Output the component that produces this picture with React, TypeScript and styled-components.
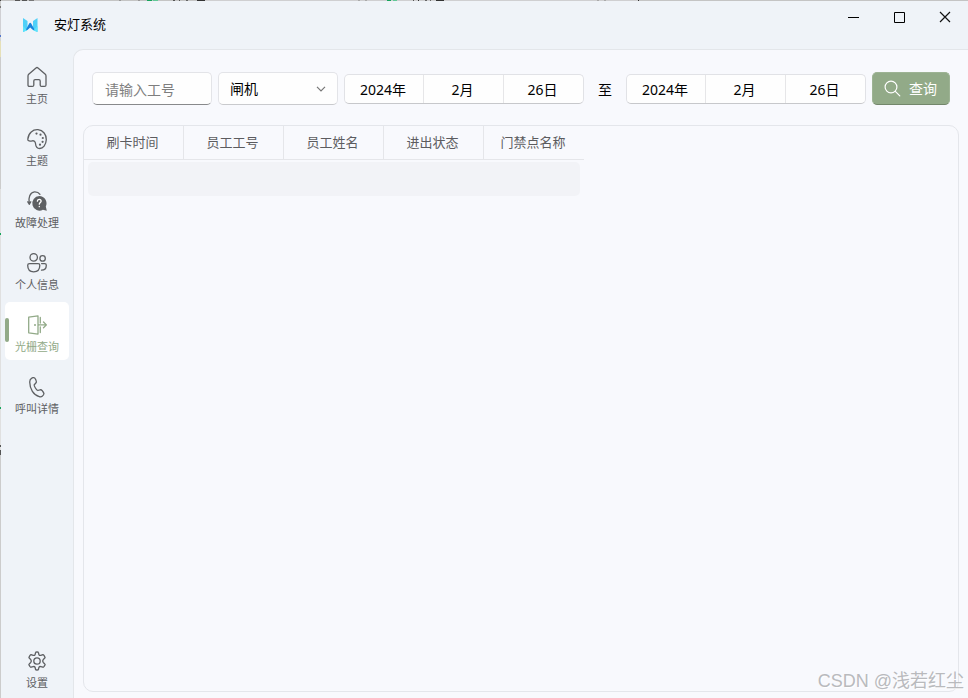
import React from "react";
import styled, { createGlobalStyle, css } from "styled-components";

const GlobalStyle = createGlobalStyle`
  * { box-sizing: border-box; }
  html, body { margin: 0; padding: 0; overflow: hidden; }
  body { font-family: "Noto Sans", "Noto Sans CJK SC", sans-serif; }
`;

const Screen = styled.div`
  position: relative;
  display: grid;
  grid-template: 1px 1fr / 1px 1fr;
  width: 968px;
  height: 698px;
  overflow: hidden;
`;

const TopEdge = styled.div`
  grid-column: 1 / 3;
  background: linear-gradient(
    90deg,
    #444 0 1px, #c4c4c4 1px 15px, #555 15px 20px, #c4c4c4 20px 22px, #555 22px 27px, #c4c4c4 27px 29px,
    #777 29px 34px, #c4c4c4 34px 119px, #999 119px 121px, #c4c4c4 121px 138px, #999 138px 140px,
    #c4c4c4 140px 147px, #16a45c 147px 152px, #c4c4c4 152px 153px, #62c898 153px 158px, #c4c4c4 158px 173px,
    #555 173px 175px, #c4c4c4 175px 179px, #555 179px 180px, #c4c4c4 180px 186px, #666 186px 188px,
    #c4c4c4 188px 197px, #333 197px 205px, #cfcfd1 205px 358px, #aaa 358px 360px, #cfcfd1 360px 365px,
    #aaa 365px 367px, #cfcfd1 367px 387px, #16a45c 387px 391px, #cfcfd1 391px 393px, #62c898 393px 397px,
    #cfcfd1 397px 413px, #555 413px 414px, #cfcfd1 414px 418px, #333 418px 419px, #cfcfd1 419px 425px,
    #666 425px 427px, #cfcfd1 427px 430px, #666 430px 431px, #cfcfd1 431px 436px, #333 436px 444px,
    #cfcfd1 444px 597px, #aaa 597px 599px, #cfcfd1 599px 604px, #aaa 604px 606px, #cfcfd1 606px 638px,
    #333 638px 639px, #c4c4c4 639px
  );
`;

const LeftEdge = styled.div`
  background: linear-gradient(
    180deg,
    #c8c8c8 0 5px, #777 5px 7px, #d0d0d4 7px 34px, #5577cc 34px 36px, #d4d4d4 36px 40px, #e6e0b8 40px 56px,
    #ccc 56px 188px, #e0e0e0 188px 232px, #16a45c 232px 234px, #e0e0e0 234px 406px, #16a45c 406px 408px,
    #e0e0e0 408px 444px, #555 444px 446px, #e0e0e0 446px 449px, #555 449px 454px, #ccc 454px
  );
`;

const Window = styled.div`
  display: grid;
  grid-template: 48px 1fr / 72px 1fr;
  background: #eff3f8;
`;

const TitleBar = styled.header`
  grid-column: 1 / 3;
  display: flex;
  align-items: flex-start;
  padding-left: 21px;
`;

const Logo = styled.svg`
  margin-top: 17px;
  width: 16px;
  height: 15px;
`;

const Title = styled.div`
  margin: 13px auto 0 16px;
  font-size: 13px;
  line-height: 20px;
  color: #000;
`;

const WindowButton = styled.div`
  display: grid;
  place-items: center;
  width: 46px;
  height: 32px;
  svg { display: block; }
`;

const MaximizeButton = styled(WindowButton)`
  padding-top: 1px;
  height: 33px;
`;

const CloseButton = styled(WindowButton)`
  width: 45px;
  padding-right: 1px;
`;

const Sidebar = styled.nav`
  display: flex;
  flex-direction: column;
  gap: 4px;
  padding: 5px 4px 2px;
`;

const NavItem = styled.div<{ $active?: boolean; $last?: boolean }>`
  position: relative;
  display: flex;
  flex-direction: column;
  align-items: center;
  width: 64px;
  height: 58px;
  padding-top: 13px;
  border-radius: 5px;
  color: #5e6063;
  ${(p) => p.$last && css`margin-top: auto;`}
  ${(p) =>
    p.$active &&
    css`
      background: #fff;
      color: #92aa88;
      &::before {
        content: "";
        position: absolute;
        left: 0;
        top: 16px;
        width: 4px;
        height: 24px;
        border-radius: 2px;
        background: #92aa88;
      }
    `}
  svg { display: block; width: 20px; height: 20px; overflow: visible; }
`;

const NavLabel = styled.span`
  margin-top: 4px;
  font-size: 11px;
  line-height: 16px;
  white-space: nowrap;
`;

const Content = styled.main`
  display: flex;
  flex-direction: column;
  border: 1px solid #e3e6ea;
  border-right: 0;
  border-bottom: 0;
  border-top-left-radius: 10px;
  background: #f8f9fd;
  padding: 22px 9px 6px 9px;
`;

const Toolbar = styled.div`
  display: flex;
  align-items: center;
  gap: 6px;
  height: 33px;
  padding-left: 9px;
  font-size: 14px;
  color: #000;
`;

const Field = styled.div<{ $input?: boolean }>`
  display: flex;
  align-items: center;
  justify-content: space-between;
  width: 120px;
  height: 33px;
  padding: ${(p) => (p.$input ? "1px 12px 0" : "0 11px 2px")};
  border: 1px solid #e3e4e8;
  border-bottom-color: ${(p) => (p.$input ? "#88898b" : "#c9cacd")};
  border-radius: 5px;
  background: #fefefe;
  color: ${(p) => (p.$input ? "#7e7e7e" : "#000")};
  svg { display: block; margin-top: 2px; }
`;

const DatePicker = styled.div`
  display: grid;
  grid-template-columns: 78px 80px 80px;
  width: 240px;
  height: 30px;
  border: 1px solid #e1e2e6;
  border-bottom-color: #c7c8cb;
  border-radius: 5px;
  background: #fefefe;
`;

const DatePart = styled.div`
  display: flex;
  align-items: center;
  justify-content: center;
  padding: 1px 2px 0 0;
  & + & { border-left: 1px solid #e6e6e8; }
`;

const Separator = styled.span`
  width: 30px;
  text-align: center;
`;

const QueryButton = styled.button`
  display: flex;
  align-items: center;
  gap: 8px;
  width: 78px;
  height: 33px;
  padding: 0 0 1px 11px;
  border: 1px solid #9db394;
  border-bottom-color: #73876b;
  border-radius: 5px;
  background: #92aa88;
  color: #fff;
  font: 14px "Noto Sans", "Noto Sans CJK SC", sans-serif;
`;

const TableFrame = styled.section`
  flex: 1;
  width: 876px;
  margin-top: 20px;
  border: 1px solid #e4e6eb;
  border-radius: 10px;
`;

const HeaderRow = styled.div`
  display: grid;
  grid-template-columns: 100px 100px 100px 100px 100px;
  width: 500px;
  height: 34px;
  border-bottom: 1px solid #e5e6ea;
`;

const HeaderCell = styled.div`
  display: flex;
  align-items: center;
  justify-content: center;
  padding: 0 2px 2px 0;
  border-right: 1px solid #e5e6ea;
  font-size: 13px;
  color: #5c5c5f;
  &:last-child { border-right: 0; }
`;

const EmptyRow = styled.div`
  width: 492px;
  height: 34px;
  margin: 2px 0 0 4px;
  border-radius: 5px;
  background: #f2f3f7;
`;

const Watermark = styled.div`
  position: absolute;
  right: 4px;
  bottom: 4px;
  font: 18px/26px "Liberation Sans", "Noto Sans CJK SC", sans-serif;
  color: #b9babd;
  text-shadow: 1px 1px 0 #fff;
  white-space: nowrap;
`;

const Icon = ({ children }: { children: React.ReactNode }) => (
  <svg viewBox="0 0 20 20" fill="none" stroke="currentColor" strokeWidth="1.3" strokeLinecap="round" strokeLinejoin="round">
    {children}
  </svg>
);

const HomeIcon = () => (
  <Icon>
    <path d="M1 8.9Q1 8 1.700 7.300L9 .9q1-.8 2 0l7.300 6.400q.7.7.7 1.600v9q0 1.500-1.500 1.500h-3q-1.300 0-1.300-1.500V14q0-1.400-1.300-1.400H8.100q-1.300 0-1.300 1.400v3.900q0 1.500-1.400 1.500H2.500Q1 19.400 1 17.900Z" />
  </Icon>
);

const PaletteIcon = () => (
  <Icon>
    <path d="M.8 10.200C1.300 4 6 .2 11 .7c5 .6 8.600 4.800 8.300 10.100-.3 5.200-3.300 8.700-6.600 8.700-3.600 0-4-2.500-4.200-5-.2-2-1.600-3-3.200-2.700-2.300.5-4.700.5-4.500-1.600Z" />
    <g fill="currentColor" stroke="none">
      <circle cx="9.5" cy="4.600" r="1.100" /><circle cx="13.500" cy="5.700" r="1.100" /><circle cx="15.800" cy="9" r="1.100" />
      <circle cx="15.600" cy="12.800" r="1.100" /><circle cx="13" cy="15.700" r="1.100" />
    </g>
  </Icon>
);

const FaultIcon = () => (
  <Icon>
    <path d="m.8 10.800 1.600 2.500 1.400-2.500M2.300 12.500C1 7 3 1.300 7.500.8c2.500-.1 4.300.8 5.500 2.500" />
    <path d="M12.300 5a7.300 7.300 0 0 1 6.500 10.500l1 4.300-3.900-1A7.300 7.300 0 1 1 12.300 5Z" fill="currentColor" stroke="none" />
    <path d="M10.400 10.200c.2-2.700 4-2.200 3.700.1-.2 1.200-1.800 1.400-1.800 2.900M12.300 15.500v.2" stroke="#fff" />
  </Icon>
);

const PeopleIcon = () => (
  <Icon>
    <circle cx="6.700" cy="4.400" r="3.700" />
    <circle cx="15.600" cy="5.400" r="2.700" />
    <path d="M2.500 10.600h8.600q1.700 0 1.700 1.700c0 4.400-2.700 6.500-6.100 6.500S.7 16.700.7 12.300q0-1.700 1.800-1.700ZM14.600 10.600h3.200q1.500 0 1.500 1.600c0 3.300-1.700 5-4.800 5" />
  </Icon>
);

const DoorIcon = () => (
  <Icon>
    <path d="M1.700 2.200 11 .9v18.200l-9.300-1.300ZM13.300 2.500V8M13.300 12v5.600M11 9.900h8.300M16.500 7l2.900 2.900-2.900 2.900" />
    <circle cx="8" cy="10" r="1" fill="currentColor" stroke="none" />
  </Icon>
);

const PhoneIcon = () => (
  <Icon>
    <path d="m4.800 1.100 1.100-.4c1-.3 2 .1 2.400 1.100l.9 2c.4.8.2 1.700-.5 2.400L7.200 7.700c-.2.700.5 2.200 1.200 3.300.8 1.300 1.700 2.300 2.400 2.500l2-.6c.9-.3 1.800 0 2.400.8l1.300 1.800c.6.8.5 1.900-.2 2.600l-.8.8c-.9.8-2.100 1.100-3.200.7C6.500 18.100 2.800 11.800 2.700 5.100c0-1.900.6-3.300 2.100-4Z" />
  </Icon>
);

const GearIcon = () => (
  <Icon>
    <g transform="translate(0 .5)">
      <path d="M8.100 3.100 8.600 1q.1-.5 1.400-.5t1.400.5l.5 2.100q.6 1.100 1.900.8l2.100-.7q.5-.1 1.200.9l.9 1.600q.2.500-.2.900l-1.500 1.400q-1.300 1.500 0 3l1.500 1.400q.5.400.2 1l-.9 1.500q-.7 1-1.200.8l-2.100-.6q-1.400-.4-1.900.8l-.5 2.100q-.1.500-1.400.5t-1.400-.5l-.5-2.100q-.6-1.200-1.900-.8l-2.100.6q-.5.200-1.200-.8L2 13.400q-.3-.6.200-1L3.700 11q1.300-1.500 0-3L2.200 6.600q-.4-.4-.2-.9l.9-1.600q.7-1 1.200-.9l2.100.7q1.300.3 1.900-.8Z" />
      <circle cx="10" cy="9.500" r="3.200" />
    </g>
  </Icon>
);

const navItems = [
  { label: "主页", icon: <HomeIcon /> },
  { label: "主题", icon: <PaletteIcon /> },
  { label: "故障处理", icon: <FaultIcon /> },
  { label: "个人信息", icon: <PeopleIcon /> },
  { label: "光栅查询", icon: <DoorIcon />, active: true },
  { label: "呼叫详情", icon: <PhoneIcon /> },
];

const columns = ["刷卡时间", "员工工号", "员工姓名", "进出状态", "门禁点名称"];

const DateField = () => (
  <DatePicker>
    {["2024年", "2月", "26日"].map((part) => (
      <DatePart key={part}>{part}</DatePart>
    ))}
  </DatePicker>
);

export default function App() {
  return (
    <>
      <GlobalStyle />
      <Screen>
        <TopEdge />
        <LeftEdge />
        <Window>
          <TitleBar>
            <Logo viewBox="0 0 16 15">
              <path d="M1 0 5.500 3v9L1 14ZM15.500 0 11 3v9l4.500 2Z" fill="#4fd0f8" />
              <path d="m3.500 12.500 3.700-7q1-1.300 2 0l3.800 7-2.300-.8-2.500-2.200-2.500 2.200Z" fill="#1684dc" />
              <path d="M1 8v6l4-1.500ZM15.500 8v6l-4-1.500Z" fill="#5be2fb" />
            </Logo>
            <Title>安灯系统</Title>
            <WindowButton>
              <svg width="12" height="12"><path d="M0 6.500h11" stroke="#000" /></svg>
            </WindowButton>
            <MaximizeButton>
              <svg width="12" height="12"><path d="M.5.500h10v10H.5Z" fill="none" stroke="#000" /></svg>
            </MaximizeButton>
            <CloseButton>
              <svg width="12" height="12"><path d="m1 1 10 10M11 1 1 11" stroke="#111" strokeWidth="1.200" /></svg>
            </CloseButton>
          </TitleBar>
          <Sidebar>
            {navItems.map((item) => (
              <NavItem key={item.label} $active={item.active}>
                {item.icon}
                <NavLabel>{item.label}</NavLabel>
              </NavItem>
            ))}
            <NavItem $last>
              <GearIcon />
              <NavLabel>设置</NavLabel>
            </NavItem>
          </Sidebar>
          <Content>
            <Toolbar>
              <Field $input>请输入工号</Field>
              <Field>
                闸机
                <svg width="10" height="6"><path d="m1 .8 4 4 4-4" fill="none" stroke="#777" strokeWidth="1.200" /></svg>
              </Field>
              <DateField />
              <Separator>至</Separator>
              <DateField />
              <QueryButton>
                <svg width="17" height="17" fill="none" stroke="#fff" strokeWidth="1.200" strokeLinecap="round">
                  <circle cx="7" cy="7" r="5.900" />
                  <path d="m11.300 11.300 4.500 4.500" />
                </svg>
                查询
              </QueryButton>
            </Toolbar>
            <TableFrame>
              <HeaderRow>
                {columns.map((name) => (
                  <HeaderCell key={name}>{name}</HeaderCell>
                ))}
              </HeaderRow>
              <EmptyRow />
            </TableFrame>
          </Content>
        </Window>
        <Watermark>CSDN @浅若红尘</Watermark>
      </Screen>
    </>
  );
}
